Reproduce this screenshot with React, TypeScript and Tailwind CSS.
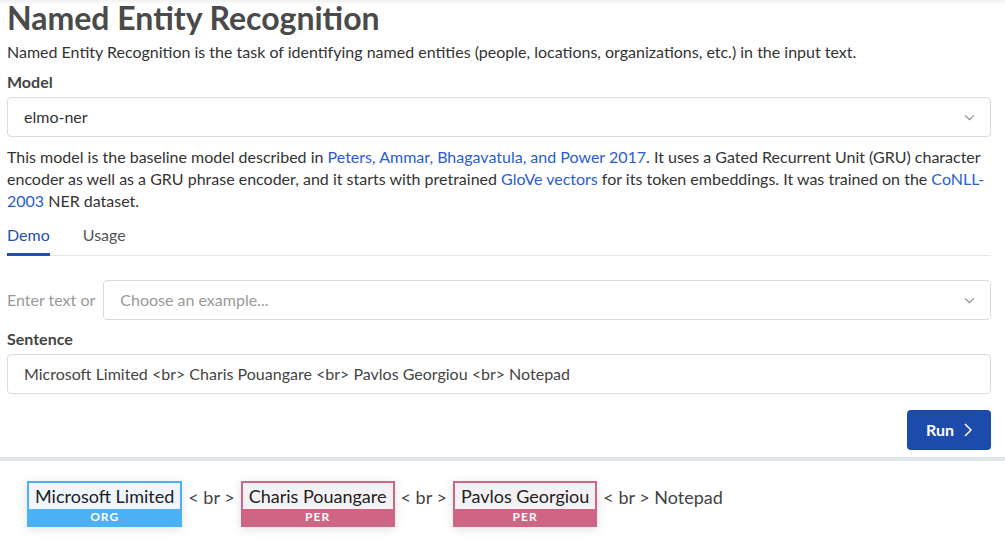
import React from 'react';

const font = { fontFamily: 'Lato, "Open Sans", sans-serif' };

function Chevron({ className }: { className?: string }) {
    return (
        <svg viewBox="0 0 12 8" className={className} fill="none" stroke="currentColor" strokeWidth="1.2">
            <path d="M1 1.5l5 5 5-5" />
        </svg>
    );
}

function Entity({ text, label, kind }: { text: string; label: string; kind: 'org' | 'per' }) {
    const org = kind === 'org';
    return (
        <span
            className={
                'inline-flex flex-col border-2 shadow-[0_2px_10px_rgba(0,0,0,0.12)] ' +
                (org ? 'border-[#4cb0f5] bg-[#4cb0f5]' : 'border-[#cf6584] bg-[#cf6584]')
            }
        >
            <span className={'px-[6px] text-[18px] leading-[26px] text-[#222] ' + (org ? 'bg-[#eef5fc]' : 'bg-[#f4f1f4]')}>
                {text}
            </span>
            <span className="text-center text-[12px] font-bold leading-[16px] tracking-[1px] text-white">{label}</span>
        </span>
    );
}

export default function App() {
    return (
        <div style={font} className="min-h-[539px] bg-white text-[#333] shadow-[inset_0_5px_6px_-5px_rgba(0,0,0,0.12)]">
            <div className="pl-[7px] pr-[14px]">
                <h1 className="text-[32px] font-bold leading-[36px] text-[#4a4a4a]">Named Entity Recognition</h1>
                <p className="mt-[5px] text-[16px] leading-[22px]">
                    Named Entity Recognition is the task of identifying named entities (people, locations, organizations, etc.) in the input text.
                </p>

                <div className="mt-[8px] text-[16px] font-bold leading-[22px] text-[#444]">Model</div>
                <div className="mt-[4px] flex h-[40px] items-center justify-between rounded-[4px] border border-[#d9dbe0] pl-[16px] pr-[15px] text-[16px]">
                    <span className="text-[#333]">elmo-ner</span>
                    <Chevron className="h-[7px] w-[11px] text-[#888]" />
                </div>

                <p className="mt-[9px] text-[16px] leading-[22px]">
                    This model is the baseline model described in{' '}
                    <a className="text-[#2a5cd4]">Peters, Ammar, Bhagavatula, and Power 2017</a>. It uses a Gated Recurrent Unit (GRU) character
                    encoder as well as a GRU phrase encoder, and it starts with pretrained <a className="text-[#2a5cd4]">GloVe vectors</a> for its
                    token embeddings. It was trained on the <a className="text-[#2a5cd4]">CoNLL-2003</a> NER dataset.
                </p>

                <div className="mt-[12px] flex gap-[33px] border-b border-[#e5e7eb] text-[16px] leading-[22px]">
                    <div className="-mb-px border-b-[3px] border-[#1f4fae] pb-[7px] text-[#1f4fae]">Demo</div>
                    <div className="pb-[7px] text-[#555]">Usage</div>
                </div>

                <div className="mt-[24px] flex items-center gap-[8px]">
                    <span className="text-[16px] text-[#999]">Enter text or</span>
                    <div className="flex h-[40px] flex-1 items-center justify-between rounded-[4px] border border-[#d9dbe0] pl-[16px] pr-[15px] text-[16px]">
                        <span className="text-[#999]">Choose an example...</span>
                        <Chevron className="h-[7px] w-[11px] text-[#888]" />
                    </div>
                </div>

                <div className="mt-[8px] text-[16px] font-bold leading-[22px] text-[#444]">Sentence</div>
                <div className="mt-[4px] flex h-[40px] items-center rounded-[4px] border border-[#d9dbe0] pl-[16px] text-[16px] text-[#444]">
                    Microsoft Limited &lt;br&gt; Charis Pouangare &lt;br&gt; Pavlos Georgiou &lt;br&gt; Notepad
                </div>

                <div className="mt-[16px] flex justify-end">
                    <button className="flex h-[40px] w-[84px] items-center justify-center gap-[10px] rounded-[4px] bg-[#1d4bab] text-[16px] font-bold text-white">
                        Run
                        <svg viewBox="0 0 8 14" className="h-[14px] w-[8px]" fill="none" stroke="currentColor" strokeWidth="1.5">
                            <path d="M1 1l6 6-6 6" />
                        </svg>
                    </button>
                </div>
            </div>

            <div className="mt-[7px] h-[4px] bg-[#e1e4e9]" />

            <div className="mt-[20px] flex items-start gap-[6px] pl-[27px] text-[18px] leading-[26px] text-[#444]">
                <Entity text="Microsoft Limited" label="ORG" kind="org" />
                <span className="pt-[3px]">&lt; br &gt;</span>
                <Entity text="Charis Pouangare" label="PER" kind="per" />
                <span className="pt-[3px]">&lt; br &gt;</span>
                <Entity text="Pavlos Georgiou" label="PER" kind="per" />
                <span className="pt-[3px]">&lt; br &gt; Notepad</span>
            </div>
        </div>
    );
}
